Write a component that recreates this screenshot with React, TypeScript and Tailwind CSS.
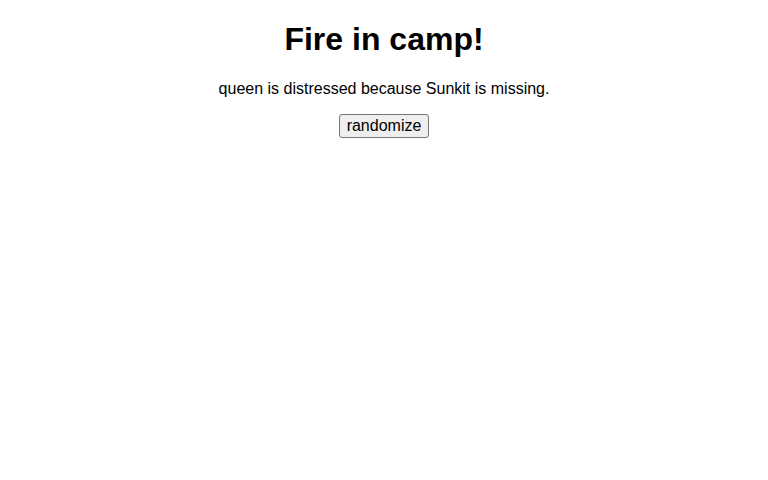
import { useState } from "react";

const NAMES = ["Sunkit", "Ashpaw", "Mosswhisker", "Lionblaze", "Briarlight"];
const CATS = ["queen", "leader", "apprentice", "elder", "medicine cat"];

export default function App() {
  const [cat, setCat] = useState("queen");
  const [missing, setMissing] = useState("Sunkit");

  function randomize() {
    setCat(CATS[Math.floor(Math.random() * CATS.length)]);
    setMissing(NAMES[Math.floor(Math.random() * NAMES.length)]);
  }

  return (
    <div className="text-center text-black bg-white font-['Liberation_Sans',Arial,sans-serif]">
      <h1 className="text-[32px] leading-[37px] font-bold pt-[21px] mb-[22px]">Fire in camp!</h1>
      <p className="text-base leading-[18px] mb-4">
        {cat} is distressed because {missing} is missing.
      </p>
      <button
        onClick={randomize}
        className="text-base leading-[18px] px-[7px] py-[2px] bg-[#efefef] border border-[#767676] rounded-[3px] hover:bg-[#e5e5e5]"
      >
        randomize
      </button>
    </div>
  );
}
